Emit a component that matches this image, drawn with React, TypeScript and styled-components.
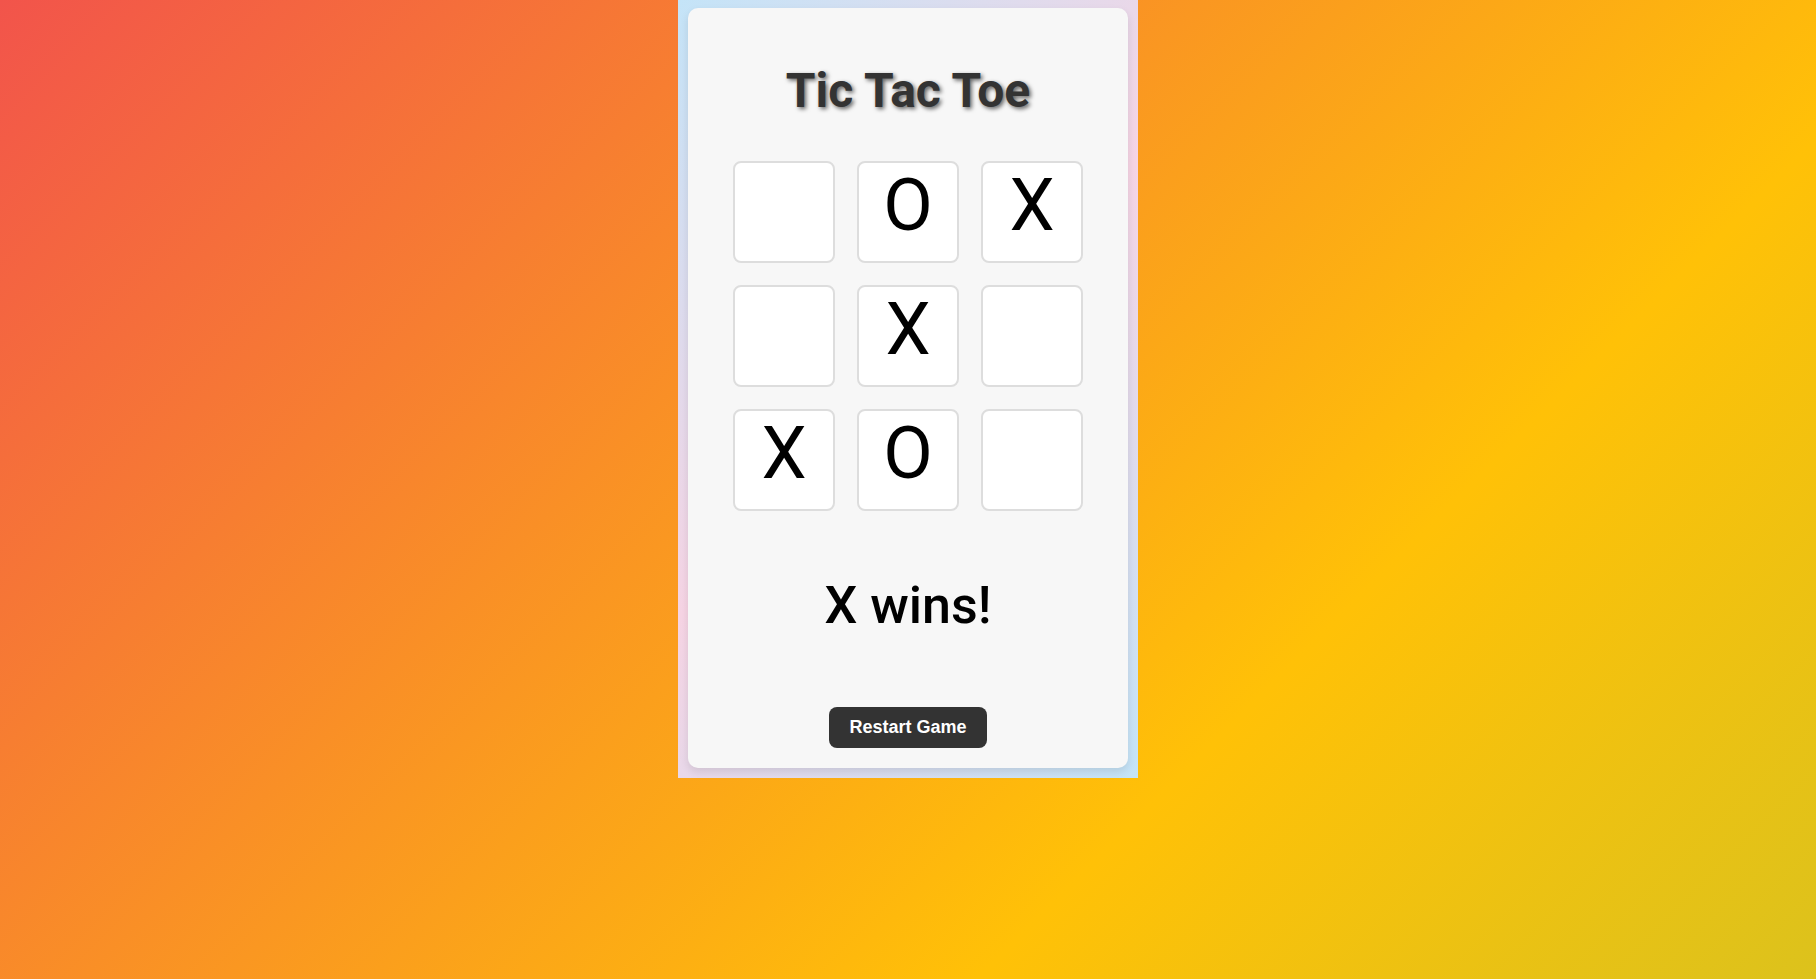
import React, { useState } from 'react'
import styled, { createGlobalStyle } from 'styled-components'

type Mark = 'X' | 'O' | null

const LINES = [
  [0, 1, 2],
  [3, 4, 5],
  [6, 7, 8],
  [0, 3, 6],
  [1, 4, 7],
  [2, 5, 8],
  [0, 4, 8],
  [2, 4, 6],
]

const START: Mark[] = [null, 'O', 'X', null, 'X', null, 'X', 'O', null]

const getWinner = (board: Mark[]): Mark => {
  for (const [a, b, c] of LINES) {
    if (board[a] && board[a] === board[b] && board[a] === board[c]) return board[a]
  }
  return null
}

const App: React.FC = () => {
  const [board, setBoard] = useState<Mark[]>(START)
  const [next, setNext] = useState<'X' | 'O'>('O')

  const winner = getWinner(board)
  const full = board.every(Boolean)

  const play = (i: number) => {
    if (board[i] || winner) return
    const copy = board.slice()
    copy[i] = next
    setBoard(copy)
    setNext(next === 'X' ? 'O' : 'X')
  }

  const restart = () => {
    setBoard(Array(9).fill(null))
    setNext('X')
  }

  let status = `Next: ${next}`
  if (winner) status = `${winner} wins!`
  else if (full) status = 'Draw!'

  return (
    <>
      <GlobalStyle />
      <Frame>
        <Card>
          <Title>Tic Tac Toe</Title>
          <Board>
            {board.map((mark, i) => (
              <Cell key={i} onClick={() => play(i)}>
                {mark}
              </Cell>
            ))}
          </Board>
          <Status>{status}</Status>
          <RestartButton onClick={restart}>Restart Game</RestartButton>
        </Card>
      </Frame>
    </>
  )
}

export default App

const GlobalStyle = createGlobalStyle`
  html, body {
    margin: 0;
    min-height: 100%;
  }

  body {
    min-height: 100vh;
    font-family: Roboto, "Liberation Sans", sans-serif;
    background: linear-gradient(135deg, #f2544b 0%, #ffc107 70%, #dcc21c 100%);
    background-attachment: fixed;
  }
`

const Frame = styled.div`
  width: 460px;
  margin: 0 auto;
  padding: 8px 10px 10px;
  box-sizing: border-box;
  background: linear-gradient(135deg, #c4e4f8 0%, #f6d4e4 50%, #c4e4f8 100%);
`

const Card = styled.div`
  display: flex;
  flex-direction: column;
  align-items: center;
  padding: 20px;
  background: #f7f7f7;
  border-radius: 10px;
  box-shadow: 0 4px 8px rgba(0, 0, 0, 0.1);
`

const Title = styled.h1`
  margin: 34px 0 42px;
  font-family: Roboto, "Liberation Sans", sans-serif;
  font-size: 48px;
  font-weight: 700;
  line-height: normal;
  color: #333;
  text-shadow: 2px 2px 4px rgba(0, 0, 0, 0.6);
`

const Board = styled.div`
  display: grid;
  grid-template-columns: repeat(3, 102px);
  grid-auto-rows: 102px;
  gap: 22px;
`

const Cell = styled.div`
  box-sizing: border-box;
  background: #fff;
  border: 2px solid #ddd;
  border-radius: 8px;
  font-family: Roboto, "Liberation Sans", sans-serif;
  font-size: 72px;
  line-height: normal;
  text-align: center;
  color: #000;
  cursor: pointer;
  user-select: none;
`

const Status = styled.div`
  margin-top: 64px;
  font-family: Roboto, "Liberation Sans", sans-serif;
  font-size: 52px;
  font-weight: 500;
  line-height: normal;
  color: #000;
`

const RestartButton = styled.button`
  margin-top: 71px;
  padding: 10px 20px;
  border: none;
  border-radius: 8px;
  background: #333;
  color: #fff;
  font-family: "Liberation Sans", Arial, sans-serif;
  font-size: 18px;
  font-weight: 700;
  line-height: normal;
  cursor: pointer;
`
